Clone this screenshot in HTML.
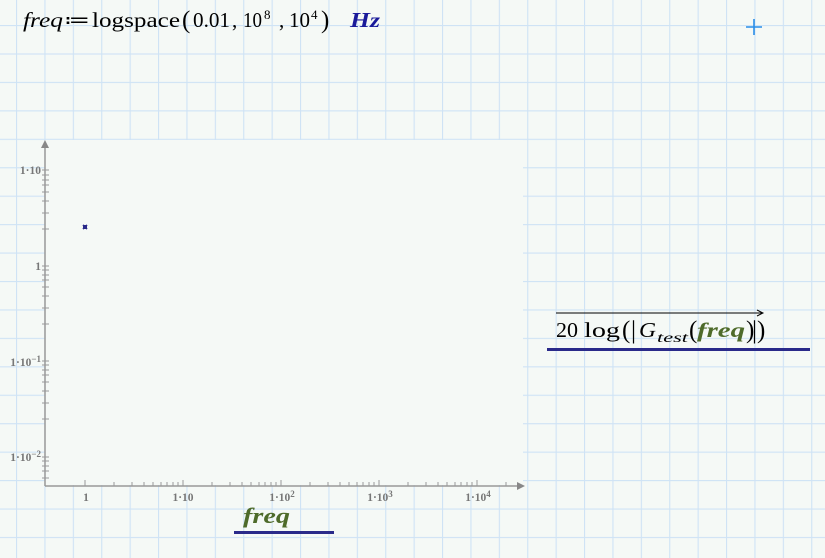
<!DOCTYPE html>
<html><head><meta charset="utf-8"><style>
html,body{margin:0;padding:0;width:825px;height:558px;overflow:hidden;background:#f5f9f6}
svg{display:block}
.m{font-family:"Liberation Serif",serif}
</style></head><body>
<svg width="825" height="558" viewBox="0 0 825 558" xmlns="http://www.w3.org/2000/svg">
<defs>
<pattern id="g" x="16" y="25" width="28.4" height="28.44" patternUnits="userSpaceOnUse">
<path d="M0.5 0V28.44M0 0.5H28.4" stroke="#cfe3f5" stroke-width="1.2" fill="none"/>
</pattern>
</defs>
<rect width="825" height="558" fill="url(#g)"/>
<rect x="45" y="140" width="478" height="345" fill="#f5f9f6"/>
<!-- header -->
<g class="m" font-size="21" fill="#000">
<text x="23" y="27" font-style="italic" textLength="40" lengthAdjust="spacingAndGlyphs">freq</text>
<text x="64" y="27" textLength="26" lengthAdjust="spacingAndGlyphs">≔</text>
<text x="92" y="27" textLength="88" lengthAdjust="spacingAndGlyphs">logspace</text>
<text x="182" y="28" font-size="25">(</text>
<text x="193" y="27" textLength="37" lengthAdjust="spacingAndGlyphs">0.01</text>
<text x="232" y="27">,</text>
<text x="243" y="27" textLength="19" lengthAdjust="spacingAndGlyphs">10</text>
<text x="264" y="19" font-size="13">8</text>
<text x="279" y="27">,</text>
<text x="289" y="27" textLength="21" lengthAdjust="spacingAndGlyphs">10</text>
<text x="311" y="19" font-size="13">4</text>
<text x="321" y="28" font-size="25">)</text>
<text x="350" y="27" font-style="italic" font-weight="bold" fill="#1a1a9a" textLength="30" lengthAdjust="spacingAndGlyphs">Hz</text>
</g>
<!-- plus -->
<path d="M746 27H762M754 19V35" stroke="#2a8ee8" stroke-width="1.6"/>
<!-- axes -->
<g stroke="#999" stroke-width="1.5" fill="none">
<path d="M45 486V146M45 486H519"/>
</g>
<path d="M45 140L41 148H49Z M525 486L517 482V490Z" fill="#888"/>
<g class="m" font-size="11.5" font-weight="bold" fill="#777" text-anchor="end">
<text x="41" y="174">1·10</text>
<text x="41" y="270">1</text>
<text x="41" y="366">1·10<tspan dy="-4" font-size="9">−1</tspan></text>
<text x="41" y="461">1·10<tspan dy="-4" font-size="9">−2</tspan></text>
</g>
<g class="m" font-size="11.5" font-weight="bold" fill="#777" text-anchor="middle">
<text x="86" y="501">1</text>
<text x="183" y="501">1·10</text>
<text x="282" y="501">1·10<tspan dy="-4" font-size="9">2</tspan></text>
<text x="380" y="501">1·10<tspan dy="-4" font-size="9">3</tspan></text>
<text x="478" y="501">1·10<tspan dy="-4" font-size="9">4</tspan></text>
</g>
<!-- point -->
<path d="M83 225L87 229M87 225L83 229M83 227H87M85 225V229" stroke="#2a2a8a" stroke-width="1.6"/>
<!-- x label -->
<text x="243" y="523" class="m" font-size="22" font-style="italic" font-weight="bold" fill="#4e6b2a" textLength="47" lengthAdjust="spacingAndGlyphs">freq</text>
<rect x="234" y="531" width="100" height="3" fill="#2a2a8a"/>
<!-- y expression -->
<path d="M556 313H762" stroke="#000" stroke-width="1"/>
<path d="M757 310L763 313L757 316" stroke="#000" fill="none" stroke-width="1"/>
<g class="m" font-size="21" fill="#000">
<text x="556" y="337" textLength="22" lengthAdjust="spacingAndGlyphs">20</text>
<text x="584" y="337" textLength="36" lengthAdjust="spacingAndGlyphs">log</text>
<text x="622" y="338" font-size="25">(</text>
<text x="631" y="338" font-size="25">|</text>
<text x="639" y="337" font-style="italic" textLength="17" lengthAdjust="spacingAndGlyphs">G</text>
<text x="657" y="342" font-style="italic" font-size="14" textLength="31" lengthAdjust="spacingAndGlyphs">test</text>
<text x="689" y="338" font-size="25">(</text>
<text x="697" y="337" font-style="italic" font-weight="bold" fill="#4e6b2a" textLength="48" lengthAdjust="spacingAndGlyphs">freq</text>
<text x="746" y="338" font-size="25">)</text>
<text x="752" y="338" font-size="25">|</text>
<text x="757" y="338" font-size="25">)</text>
</g>
<rect x="547" y="348" width="263" height="3" fill="#2a2a8a"/>
<g stroke="#999" stroke-width="1">
<path d="M85 486V480"/>
<path d="M114 486V482M132 486V482M144 486V482M153 486V482M161 486V482M167 486V482M173 486V482M178 486V482M183 486V480"/>
<path d="M212 486V482M230 486V482M242 486V482M251 486V482M259 486V482M265 486V482M271 486V482M276 486V482M281 486V480"/>
<path d="M310 486V482M328 486V482M340 486V482M349 486V482M357 486V482M363 486V482M369 486V482M374 486V482M379 486V480"/>
<path d="M408 486V482M426 486V482M438 486V482M447 486V482M455 486V482M461 486V482M467 486V482M472 486V482M477 486V480"/>
<path d="M506 486V482"/>
<path d="M42 170H49M42 175H49M42 180H49M42 185H49M42 192H49M42 201H49M42 213H49M42 229H49M42 266H49"/>
<path d="M42 270H49M42 275H49M42 280H49M42 287H49M42 296H49M42 308H49M42 324H49M42 361H49"/>
<path d="M42 365H49M42 370H49M42 375H49M42 382H49M42 391H49M42 403H49M42 419H49M42 457H49"/>
<path d="M42 461H49M42 466H49M42 471H49M42 478H49"/>
</g>
</svg>
</body></html>
